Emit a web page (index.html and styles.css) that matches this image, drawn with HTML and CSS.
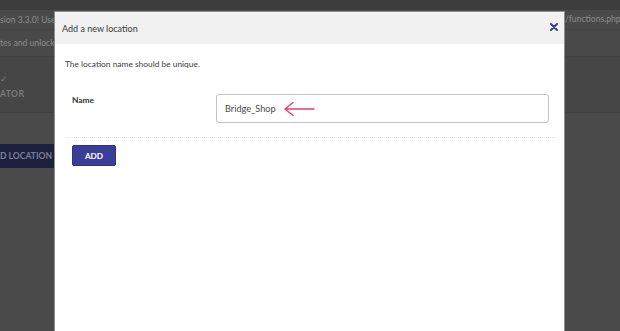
FILE: index.html
```html
<!DOCTYPE html>
<html lang="en">
<head>
<meta charset="utf-8">
<title>Add a new location</title>
<link rel="stylesheet" href="styles.css">
</head>
<body>
<div class="page">
  <div class="topstrip"></div>
  <div class="notice">
    <div class="nrow row1">
      <span class="nleft">sion 3.3.0! Use</span>
      <span class="nright">/functions.php</span>
    </div>
    <div class="nrow row2">
      <span class="nleft">tes and unlock</span>
    </div>
  </div>
  <div class="panel">
    <div class="check">&#10003;</div>
    <div class="role">ATOR</div>
  </div>
  <div class="btnrow">
    <span class="bgbtn">D LOCATION</span>
  </div>
</div>

<div class="modal">
  <div class="modal-head">
    <span class="modal-title">Add a new location</span>
    <svg class="close" width="8" height="8" viewBox="0 0 8 8" aria-label="close">
      <path d="M1 1 L7 7 M7 1 L1 7" stroke="#333a8c" stroke-width="1.9" stroke-linecap="round"/>
    </svg>
  </div>
  <div class="modal-body">
    <p class="desc">The location name should be unique.</p>
    <div class="form-row">
      <label class="label">Name</label>
      <div class="field">
        <span class="value">Bridge_Shop</span>
        <svg class="arrow" width="32" height="16" viewBox="0 0 32 16">
          <path d="M10 1.5 L2 8 L10 14.5 M2 8 L31 8" fill="none" stroke="#ec3a6c" stroke-width="1.4" stroke-linecap="round" stroke-linejoin="round"/>
        </svg>
      </div>
    </div>
    <button class="add">ADD</button>
  </div>
</div>
</body>
</html>
```

FILE: styles.css
```css
html, body {
  margin: 0;
  padding: 0;
}
body {
  width: 620px;
  height: 331px;
  overflow: hidden;
  background: #4a4a4a;
  font-family: Lato, "Open Sans", "Liberation Sans", sans-serif;
  position: relative;
}

/* dimmed page behind the modal */
.page {
  width: 620px;
}
.topstrip {
  height: 10px;
  background: #3d3d3d;
}
.notice {
  background: #494949;
  border-bottom: 1px solid #424242;
}
.nrow {
  display: flex;
  align-items: center;
  font-size: 8.6px;
  color: #8c8c8c;
  white-space: nowrap;
}
.row1 {
  height: 19px;
  border-bottom: 1px solid #444;
}
.row2 {
  height: 26px;
}
.nleft {
  width: 565px;
  flex: none;
}
.nright {
  flex: none;
  margin-top: -2px;
}
.panel {
  height: 55px;
  background: #464646;
  border-bottom: 1px solid #424242;
  color: #7a7a7a;
  font-size: 8.6px;
  white-space: nowrap;
}
.check {
  padding-top: 16px;
  height: 12px;
  line-height: 12px;
}
.role {
  margin-top: 4px;
  font-weight: bold;
  letter-spacing: 0.4px;
}
.btnrow {
  padding-top: 30px;
  white-space: nowrap;
}
.bgbtn {
  display: inline-block;
  width: 54px;
  height: 24px;
  line-height: 24px;
  background: #1d1f3f;
  color: #7e8096;
  font-size: 8.6px;
  font-weight: bold;
}

/* modal */
.modal {
  position: absolute;
  left: 54px;
  top: 11px;
  width: 509px;
  height: 319px;
  background: #fff;
  border: 1px solid #8d8d8d;
  border-bottom: 0;
}
.modal-head {
  height: 32px;
  background: #f1f1f1;
  display: flex;
  align-items: center;
  justify-content: space-between;
  padding: 0 6px 0 7px;
}
.modal-title {
  font-size: 9px;
  color: #3a3a3a;
}
.close {
  display: block;
  margin-top: -2px;
}
.modal-body {
  padding: 14px 9px 0 10px;
}
.desc {
  margin: 0;
  font-size: 8.4px;
  line-height: 12px;
  color: #3c3c3c;
}
.form-row {
  margin-top: 24px;
  padding: 0 0 14px 7px;
  border-bottom: 1px dotted #e2e2e2;
  display: flex;
  align-items: flex-start;
}
.label {
  width: 144px;
  flex: none;
  font-size: 8.4px;
  line-height: 12px;
  font-weight: bold;
  color: #333;
}
.field {
  width: 323px;
  height: 27px;
  border: 1px solid #c4c4c4;
  border-radius: 3px;
  display: flex;
  align-items: center;
  padding-left: 8px;
  box-sizing: content-box;
}
.value {
  font-size: 9.2px;
  color: #4a4a4a;
}
.arrow {
  display: block;
  margin-left: 7px;
  margin-top: 1px;
}
.add {
  display: block;
  margin: 7px 0 0 7px;
  width: 44px;
  height: 21px;
  padding: 0;
  border: 1px solid #2f3380;
  border-radius: 2px;
  background: #3a3e96;
  color: #fff;
  font-family: Lato, "Open Sans", "Liberation Sans", sans-serif;
  font-size: 8.2px;
  font-weight: bold;
}
```
